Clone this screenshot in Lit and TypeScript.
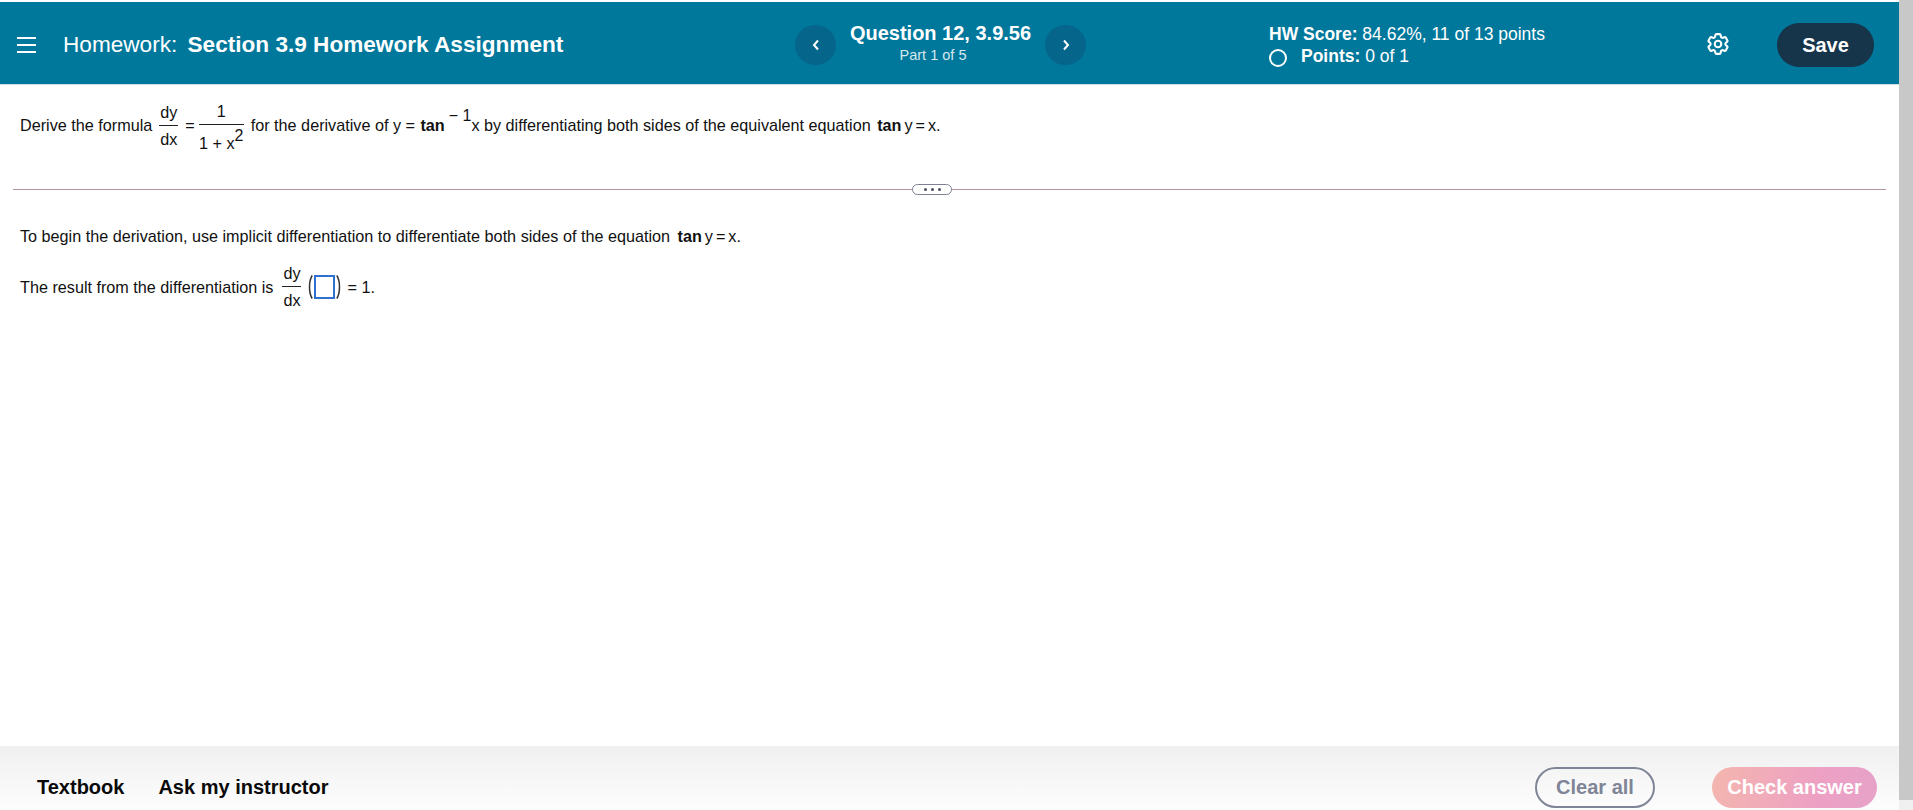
import { LitElement, html, css } from "lit";
import { customElement } from "lit/decorators.js";

@customElement("app-root")
export class AppRoot extends LitElement {
  static styles = css`
    :host { display: block; height: 810px; overflow: hidden; font-family: "Liberation Sans", Arial, sans-serif; color: #111; background: #fff; }
    .shell { display: flex; height: 810px; }
    .page { flex: 1; min-width: 0; display: flex; flex-direction: column; padding-top: 2px; box-sizing: border-box; }
    .scroll { width: 14px; display: flex; flex-direction: column; background: #f0f0f0; }
    .thumb { height: 800px; background: #c8c8c8; }
    header { height: 83px; flex: none; background: #00789c; border-bottom: 1px solid #cfdde3; box-sizing: border-box; color: #fff; display: flex; align-items: center; padding-top: 4px; }
    .burger { width: 19px; margin-left: 17px; display: flex; flex-direction: column; gap: 5px; flex: none; }
    .burger i { display: block; height: 2px; background: #fff; }
    .title { margin-left: 27px; width: 732px; flex: none; font-size: 22.6px; white-space: nowrap; }
    .title b { margin-left: 4px; }
    .center { display: flex; align-items: center; gap: 13px; flex: none; }
    .nav { width: 41px; height: 40px; border-radius: 50%; background: #06658a; display: flex; align-items: center; justify-content: center; flex: none; }
    .q { text-align: center; width: 183px; margin-bottom: 3px; }
    .q b { display: block; font-size: 20px; line-height: 23px; white-space: nowrap; }
    .q span { display: block; font-size: 14.5px; line-height: 20px; color: #d7e8ef; margin-right: 15px; }
    .score { margin-left: 183px; font-size: 17.5px; line-height: 22px; white-space: nowrap; width: 438px; flex: none; }
    .pts { display: flex; align-items: center; gap: 14px; }
    .ring { width: 14px; height: 14px; border: 2.5px solid #fff; border-radius: 50%; position: relative; top: 2px; }
    .gear { width: 22px; height: 22px; flex: none; margin-bottom: 2px; }
    .save { margin-left: 48px; width: 97px; height: 44px; border-radius: 22px; background: #16344a; color: #fff; font-weight: 700; font-size: 20px; display: flex; align-items: center; justify-content: center; flex: none; }
    .content { flex: 1; font-size: 16.2px; line-height: 18px; }
    .prob { display: flex; align-items: center; padding-left: 20px; height: 80px; white-space: pre; }
    .line { display: flex; align-items: center; white-space: pre; padding-left: 20px; }
    .frac { display: inline-flex; flex-direction: column; align-items: center; }
    .frac span { line-height: 20px; }
    .frac .top { border-bottom: 1px solid #222; align-self: stretch; text-align: center; padding-bottom: 3px; }
    .frac .bot { padding-top: 3px; }
    .f1 { width: 19px; margin: 0 7px; }
    .f2 { width: 45px; margin: 0 7px 0 4px; }
    .f2 .top { padding-top: 5px; }
    .f2 .bot { padding-top: 8px; }
    .f3 { width: 19px; margin: 0 6px 0 9px; }
    .tan { margin: 0 4px 0 1px; }
    .tan2 { margin-left: 2px; }
    .tan3 { margin-left: 3px; }
    .exp { font-size: 16px; position: relative; top: -9px; }
    .two { font-size: 16px; position: relative; top: -8px; }
    .eq { word-spacing: -1.5px; }
    .split { margin: 24px 13px 0; border-top: 1px solid #b0979f; position: relative; height: 1px; }
    .pill { position: absolute; left: 899px; top: -6px; width: 38px; height: 9px; border: 1px solid #7b8390; border-radius: 6px; background: #fff; display: flex; align-items: center; justify-content: center; gap: 4px; }
    .pill i { width: 3px; height: 3px; border-radius: 50%; background: #4a5060; }
    .p2 { margin-top: 36px; height: 18px; }
    .p3 { margin-top: 18px; }
    .paren { display: inline-flex; align-items: center; margin-right: 5px; }
    .paren svg { display: block; }
    .box { width: 21px; height: 24px; border: 2px solid #3070d0; box-sizing: border-box; background: #fff; margin: 0 1px; }
    footer { height: 64px; flex: none; background: linear-gradient(#f0f0f0, #fdfdfd); display: flex; align-items: flex-start; padding: 21px 22px 0 37px; box-sizing: border-box; }
    .link { font-weight: 700; font-size: 20px; line-height: 41px; color: #0a0a0a; margin-right: 34px; }
    .spacer { flex: 1; }
    .btn { height: 41px; border-radius: 21px; font-weight: 700; font-size: 20px; display: flex; align-items: center; justify-content: center; box-sizing: border-box; }
    .clear { width: 120px; border: 2px solid #7f8596; color: #7f8596; margin-right: 57px; }
    .check { width: 165px; color: #fff; background: linear-gradient(100deg, #f4b6ae, #eda0c4 65%, #e6a2c8); }
  `;

  render() {
    return html`<div class="shell">
      <div class="page">
        <header>
          <div class="burger"><i></i><i></i><i></i></div>
          <div class="title">Homework:<b> Section 3.9 Homework Assignment</b></div>
          <div class="center">
            <div class="nav"><svg width="8" height="12" viewBox="0 0 8 12"><path d="M6 1.5 2 6l4 4.5" fill="none" stroke="#fff" stroke-width="2"/></svg></div>
            <div class="q"><b>Question 12, 3.9.56</b><span>Part 1 of 5</span></div>
            <div class="nav"><svg width="8" height="12" viewBox="0 0 8 12"><path d="M2 1.5 6 6l-4 4.5" fill="none" stroke="#fff" stroke-width="2"/></svg></div>
          </div>
          <div class="score">
            <div><b>HW Score:</b> 84.62%, 11 of 13 points</div>
            <div class="pts"><span class="ring"></span><span><b>Points:</b> 0 of 1</span></div>
          </div>
          <svg class="gear" viewBox="2 2 20 20" fill="none" stroke="#fff" stroke-width="1.9" stroke-linejoin="round">
            <path d="M9.594 3.94c.09-.542.56-.94 1.11-.94h2.593c.55 0 1.02.398 1.11.94l.213 1.281c.063.374.313.686.645.87.074.04.147.083.22.127.325.196.72.257 1.075.124l1.217-.456a1.125 1.125 0 011.37.49l1.296 2.247a1.125 1.125 0 01-.26 1.431l-1.003.827c-.293.241-.438.613-.43.992a7.723 7.723 0 010 .255c-.008.378.137.75.43.991l1.004.827c.424.35.534.955.26 1.43l-1.298 2.247a1.125 1.125 0 01-1.369.491l-1.217-.456c-.355-.133-.75-.072-1.076.124a6.47 6.47 0 01-.22.128c-.331.183-.581.495-.644.869l-.213 1.281c-.09.543-.56.94-1.11.94h-2.594c-.55 0-1.019-.398-1.11-.94l-.213-1.281c-.062-.374-.312-.686-.644-.87a6.52 6.52 0 01-.22-.127c-.325-.196-.72-.257-1.076-.124l-1.217.456a1.125 1.125 0 01-1.369-.49l-1.297-2.247a1.125 1.125 0 01.26-1.431l1.004-.827c.292-.24.437-.613.43-.991a6.932 6.932 0 010-.255c.007-.38-.138-.751-.43-.992l-1.004-.827a1.125 1.125 0 01-.26-1.43l1.297-2.247a1.125 1.125 0 011.37-.491l1.216.456c.356.133.751.072 1.076-.124.072-.044.146-.086.22-.128.332-.183.582-.495.644-.869l.214-1.28z"/>
            <circle cx="12" cy="12" r="3"/>
          </svg>
          <div class="save">Save</div>
        </header>
        <div class="content">
          <div class="prob">Derive the formula<span class="frac f1"><span class="top">dy</span><span class="bot">dx</span></span>=<span class="frac f2"><span class="top">1</span><span class="bot">1 + x<span class="two">2</span></span></span>for the derivative of y = <b class="tan">tan</b><span class="exp">− 1</span>x by differentiating both sides of the equivalent equation <b class="tan2">tan</b><span class="eq"> y = x.</span></div>
          <div class="split"><div class="pill"><i></i><i></i><i></i></div></div>
          <div class="line p2">To begin the derivation, use implicit differentiation to differentiate both sides of the equation <b class="tan3">tan</b><span class="eq"> y = x.</span></div>
          <div class="line p3">The result from the differentiation is<span class="frac f3"><span class="top">dy</span><span class="bot">dx</span></span><span class="paren"><svg width="6" height="24" viewBox="0 0 6 24"><path d="M5.2.5C1.6 6 1.6 18 5.2 23.5" fill="none" stroke="#333" stroke-width="1.5"/></svg><span class="box"></span><svg width="6" height="24" viewBox="0 0 6 24"><path d="M.8.5C4.4 6 4.4 18 .8 23.5" fill="none" stroke="#333" stroke-width="1.5"/></svg></span>= 1.</div>
        </div>
        <footer>
          <div class="link">Textbook</div>
          <div class="link">Ask my instructor</div>
          <div class="spacer"></div>
          <div class="btn clear">Clear all</div>
          <div class="btn check">Check answer</div>
        </footer>
      </div>
      <div class="scroll"><div class="thumb"></div></div>
    </div>`;
  }
}
